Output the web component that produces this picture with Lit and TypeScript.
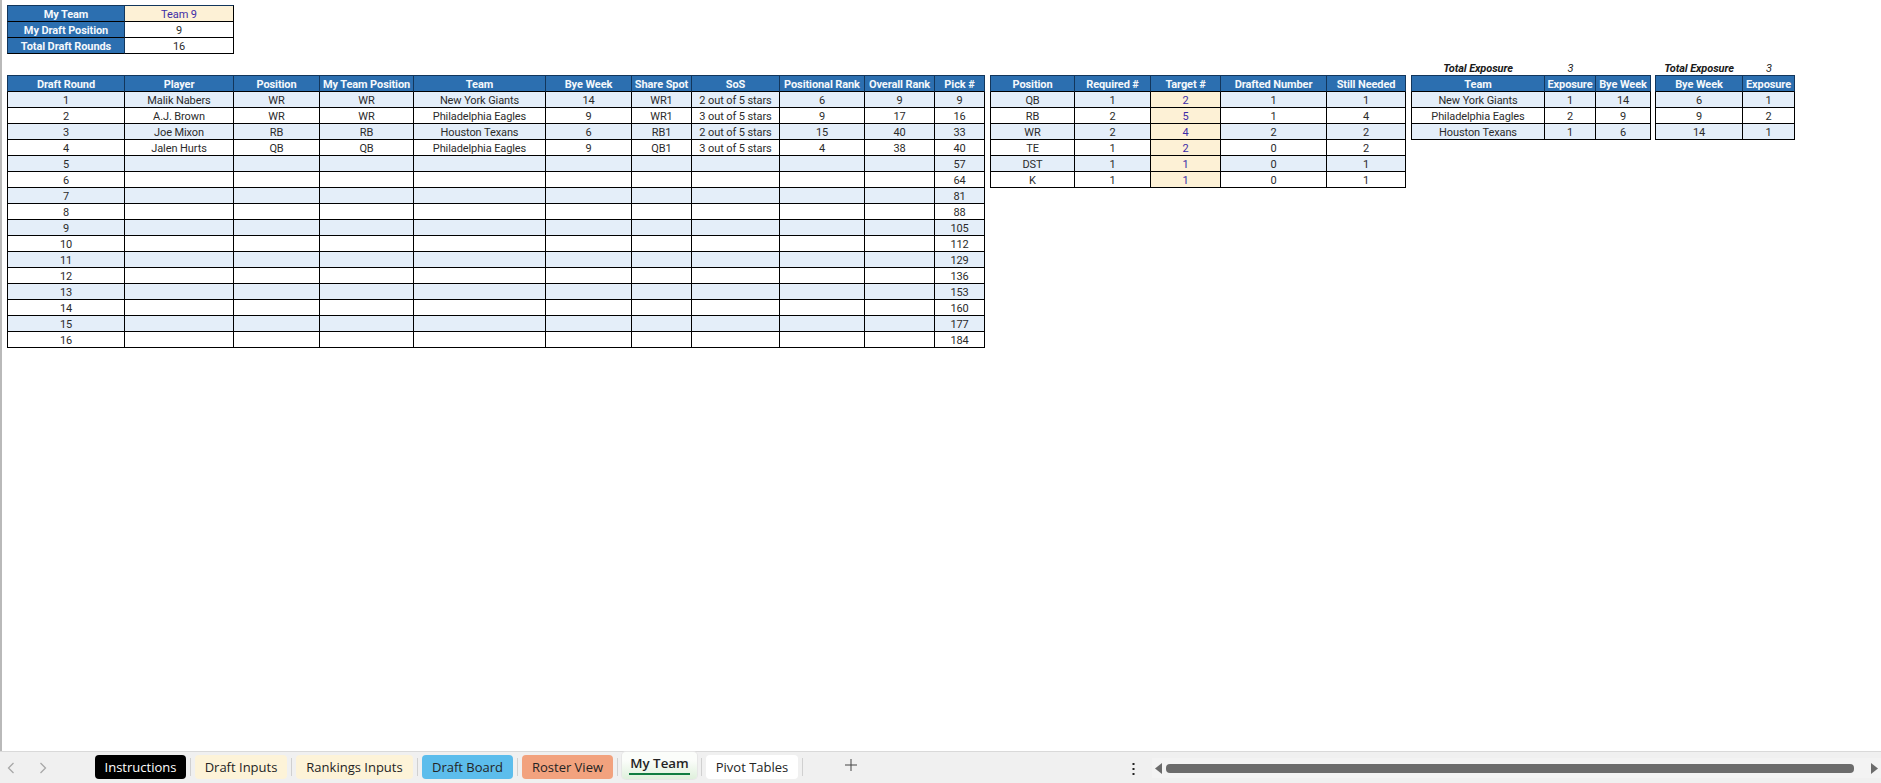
import { LitElement, html, css } from "lit";
import { customElement } from "lit/decorators.js";

type Cell = string | number;
const widen = (lines: number[]) => lines.slice(1).map((x, i) => x - lines[i] + (i === 0 ? 1 : 0));

const MAIN = widen([7, 124, 233, 319, 413, 545, 631, 691, 779, 864, 934, 984]);
const POS = widen([990, 1074, 1150, 1220, 1326, 1405]);
const TEAM = widen([1411, 1544, 1595, 1650]);
const BYE = widen([1655, 1742, 1794]);
const TOP = widen([7, 124, 233]);

const mainHead = ["Draft Round", "Player", "Position", "My Team Position", "Team", "Bye Week", "Share Spot", "SoS", "Positional Rank", "Overall Rank", "Pick #"];
const picks = [9, 16, 33, 40, 57, 64, 81, 88, 105, 112, 129, 136, 153, 160, 177, 184];
const filled: Cell[][] = [
  ["Malik Nabers", "WR", "WR", "New York Giants", 14, "WR1", "2 out of 5 stars", 6, 9],
  ["A.J. Brown", "WR", "WR", "Philadelphia Eagles", 9, "WR1", "3 out of 5 stars", 9, 17],
  ["Joe Mixon", "RB", "RB", "Houston Texans", 6, "RB1", "2 out of 5 stars", 15, 40],
  ["Jalen Hurts", "QB", "QB", "Philadelphia Eagles", 9, "QB1", "3 out of 5 stars", 4, 38],
];
const mainRows: Cell[][] = picks.map((p, i) => [i + 1, ...(filled[i] ?? Array(9).fill("")), p]);

const posRows: Cell[][] = [
  ["QB", 1, 2, 1, 1],
  ["RB", 2, 5, 1, 4],
  ["WR", 2, 4, 2, 2],
  ["TE", 1, 2, 0, 2],
  ["DST", 1, 1, 0, 1],
  ["K", 1, 1, 0, 1],
];
const teamRows: Cell[][] = [
  ["New York Giants", 1, 14],
  ["Philadelphia Eagles", 2, 9],
  ["Houston Texans", 1, 6],
];
const byeRows: Cell[][] = [
  [6, 1],
  [9, 2],
  [14, 1],
];

interface Tab {
  label: string;
  cls: string;
  width: number;
}
const tabs: Tab[] = [
  { label: "Instructions", cls: "black", width: 91 },
  { label: "Draft Inputs", cls: "cream", width: 92 },
  { label: "Rankings Inputs", cls: "cream", width: 117 },
  { label: "Draft Board", cls: "blue", width: 91 },
  { label: "Roster View", cls: "orange", width: 91 },
  { label: "My Team", cls: "active", width: 75 },
  { label: "Pivot Tables", cls: "white", width: 92 },
];

@customElement("app-root")
export class AppRoot extends LitElement {
  static styles = css`
    :host {
      display: flex;
      flex-direction: column;
      height: 783px;
      width: 1881px;
      overflow: hidden;
      background: #fff;
      font-family: Roboto, "Liberation Sans", sans-serif;
      color: #2b2b2b;
    }
    .sheet {
      flex: 1;
      min-height: 0;
      box-sizing: border-box;
      border-left: 2px solid #b9b9b9;
      padding: 5px 0 0 5px;
      background: #fff;
    }
    .tables {
      display: flex;
      align-items: flex-start;
      margin-top: 5px;
    }
    .main,
    .pos {
      margin-right: 5px;
    }
    .offset {
      margin-top: 16px;
    }
    .team {
      margin-right: 4px;
    }
    table {
      border-collapse: separate;
      border-spacing: 0;
      table-layout: fixed;
      flex: none;
    }
    th,
    td {
      box-sizing: border-box;
      height: 16px;
      padding: 2px 0 0;
      font-size: 11px;
      line-height: 13px;
      text-align: center;
      white-space: nowrap;
      overflow: hidden;
      border-right: 1px solid #000;
      border-bottom: 1px solid #000;
      font-weight: 400;
      letter-spacing: -0.1px;
    }
    tr > :first-child {
      border-left: 1px solid #000;
    }
    th {
      background: #2c6fb0;
      color: #f4f8fc;
      font-weight: 700;
      font-size: 11px;
      border-right-color: #12365c;
    }
    tr > th:first-child {
      border-left-color: #12365c;
    }
    thead th {
      height: 17px;
      border-top: 1px solid #12365c;
    }
    .top tr:first-child > * {
      height: 17px;
      border-top: 1px solid #12365c;
    }
    .top td {
      border-left: 0;
    }
    tbody tr:nth-child(odd) td {
      background: #e4eef9;
    }
    .top tbody tr:nth-child(odd) td {
      background: #fff;
    }
    .top tbody tr:first-child td,
    tbody tr td.input {
      background: #fdf1d6;
      color: #3d2ca6;
    }
    thead tr.cap > * {
      height: 16px;
      border: 0;
      background: none;
      color: #1a1a1a;
      font-weight: 400;
      font-style: italic;
    }
    thead tr.cap > .label {
      font-weight: 700;
    }
    .bar {
      flex: none;
      height: 32px;
      box-sizing: border-box;
      border-top: 1px solid #d9d9d9;
      background: #f0f0f0;
      display: flex;
      align-items: flex-start;
      font-family: "Open Sans", "Noto Sans", sans-serif;
      font-size: 13px;
      color: #242424;
    }
    .nav {
      width: 95px;
      flex: none;
      display: flex;
      align-items: center;
      height: 32px;
      padding-left: 7px;
      box-sizing: border-box;
      gap: 24px;
    }
    .nav svg {
      display: block;
    }
    .tabs {
      display: flex;
      align-items: flex-start;
      padding-top: 3px;
    }
    .tab {
      height: 24px;
      box-sizing: border-box;
      border-radius: 4px;
      display: flex;
      align-items: center;
      justify-content: center;
      white-space: nowrap;
      line-height: 18px;
      flex: none;
    }
    .black {
      background: #000;
      color: #fff;
    }
    .cream {
      background: #fdf3d8;
    }
    .blue {
      background: #5cbdec;
    }
    .orange {
      background: #f2a27e;
    }
    .white {
      background: #fff;
    }
    .active {
      height: 27px;
      margin-top: -3px;
      border-radius: 4px;
      background: linear-gradient(#fbfdfa 0%, #fbfdfa 30%, #dff0dc 100%);
      box-shadow: 0 0 0 1px #e6e6e6;
      align-items: flex-start;
      font-weight: 600;
      font-size: 13.3px;
    }
    .active span {
      display: block;
      padding: 3px 1px 0;
      height: 18px;
      border-bottom: 2px solid #107c41;
      box-sizing: content-box;
      line-height: 16px;
    }
    .sep {
      flex: none;
      width: 1px;
      height: 18px;
      margin: 3px 4px 0 4px;
      background: #d0d0d0;
    }
    .plus {
      margin-left: 38px;
      margin-top: 7px;
      display: block;
      flex: none;
    }
    .right {
      margin-left: auto;
      display: flex;
      align-items: flex-start;
      flex: none;
    }
    .dots {
      margin-top: 11px;
      margin-right: 17px;
      display: block;
    }
    .track {
      width: 729px;
      height: 20px;
      margin-top: 6px;
      background: #f3f3f3;
      display: flex;
      align-items: center;
      box-sizing: border-box;
      padding-left: 3px;
    }
    .thumb {
      width: 688px;
      height: 9px;
      margin: 0 17px 0 4px;
      border-radius: 4px;
      background: #6b6b6b;
    }
  `;

  private colgroup(widths: number[]) {
    return html`<colgroup>${widths.map((w) => html`<col style="width:${w}px" />`)}</colgroup>`;
  }

  private sum(widths: number[]) {
    return widths.reduce((a, b) => a + b, 0);
  }

  private dataTable(widths: number[], head: string[], rows: Cell[][], cap?: Cell[], inputCol = -1) {
    return html`<table style="width:${this.sum(widths)}px">
      ${this.colgroup(widths)}
      <thead>
        ${cap
          ? html`<tr class="cap">
              ${cap.map((c) => html`<th class=${typeof c === "string" && c ? "label" : ""}>${c}</th>`)}
            </tr>`
          : ""}
        <tr>
          ${head.map((h) => html`<th>${h}</th>`)}
        </tr>
      </thead>
      <tbody>
        ${rows.map(
          (r) => html`<tr>
            ${r.map((c, i) => html`<td class=${i === inputCol ? "input" : ""}>${c}</td>`)}
          </tr>`
        )}
      </tbody>
    </table>`;
  }

  render() {
    return html`
      <div class="sheet">
        <table class="top" style="width:${this.sum(TOP)}px">
          ${this.colgroup(TOP)}
          <tbody>
            <tr><th>My Team</th><td>Team 9</td></tr>
            <tr><th>My Draft Position</th><td>9</td></tr>
            <tr><th>Total Draft Rounds</th><td>16</td></tr>
          </tbody>
        </table>
        <div class="tables">
          <div class="main offset">${this.dataTable(MAIN, mainHead, mainRows)}</div>
          <div class="pos offset">
            ${this.dataTable(POS, ["Position", "Required #", "Target #", "Drafted Number", "Still Needed"], posRows, undefined, 2)}
          </div>
          <div class="team">
            ${this.dataTable(TEAM, ["Team", "Exposure", "Bye Week"], teamRows, ["Total Exposure", 3, ""])}
          </div>
          <div>${this.dataTable(BYE, ["Bye Week", "Exposure"], byeRows, ["Total Exposure", 3])}</div>
        </div>
      </div>
      <div class="bar">
        <div class="nav">
          <svg width="8" height="12" viewBox="0 0 8 12"><path d="M6.5 1 1.5 6l5 5" fill="none" stroke="#a8a8a8" stroke-width="1.3" /></svg>
          <svg width="8" height="12" viewBox="0 0 8 12"><path d="M1.5 1l5 5-5 5" fill="none" stroke="#a8a8a8" stroke-width="1.3" /></svg>
        </div>
        <div class="tabs">
          ${tabs.map(
            (t) => html`<div class="tab ${t.cls}" style="width:${t.width}px">${t.cls === "active" ? html`<span>${t.label}</span>` : t.label}</div><div class="sep"></div>`
          )}
        </div>
        <svg class="plus" width="12" height="12" viewBox="0 0 12 12"><path d="M6 0v12M0 6h12" stroke="#444" stroke-width="1" /></svg>
        <div class="right">
          <svg class="dots" width="3" height="13" viewBox="0 0 3 13">
            <rect x="0.5" y="0" width="2" height="2" fill="#222" />
            <rect x="0.5" y="5" width="2" height="2" fill="#222" />
            <rect x="0.5" y="10" width="2" height="2" fill="#222" />
          </svg>
          <div class="track">
            <svg width="7" height="11" viewBox="0 0 7 11"><path d="M7 0v11L0 5.5z" fill="#6b6b6b" /></svg>
            <div class="thumb"></div>
            <svg width="7" height="11" viewBox="0 0 7 11"><path d="M0 0v11l7-5.5z" fill="#6b6b6b" /></svg>
          </div>
        </div>
      </div>
    `;
  }
}
